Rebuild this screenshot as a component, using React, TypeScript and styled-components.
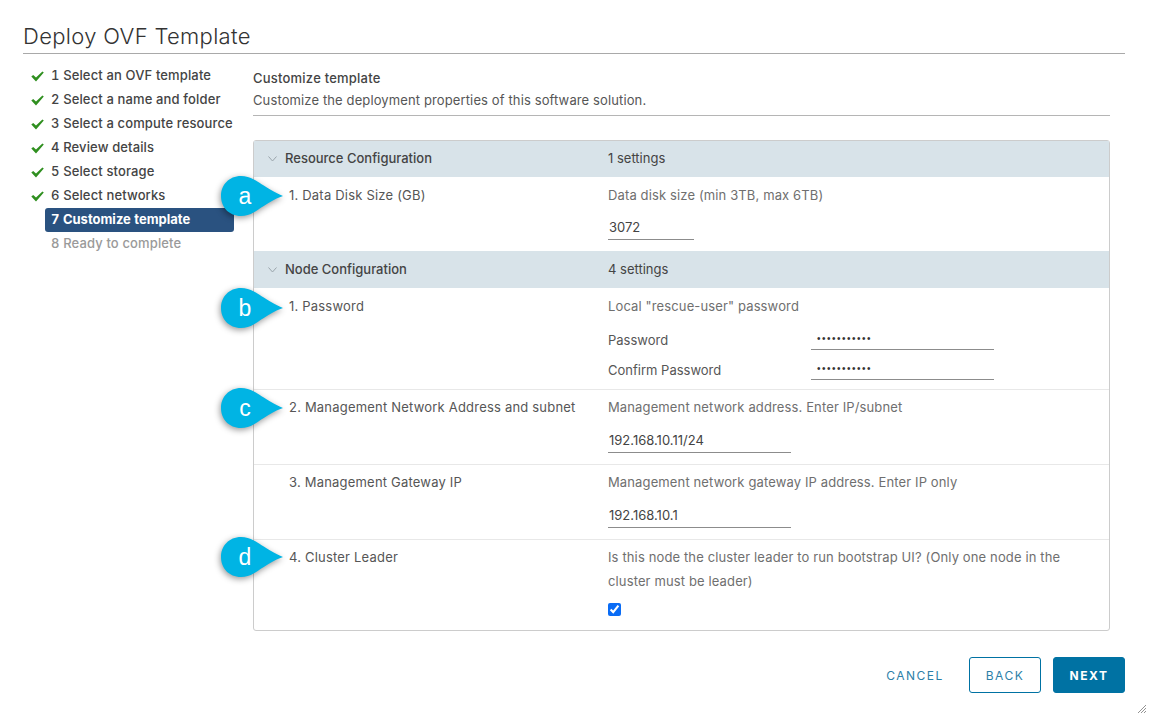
import styled, { createGlobalStyle } from "styled-components";

const GlobalStyle = createGlobalStyle`
  html, body {
    margin: 0;
    padding: 0;
    background: #fff;
  }
  body {
    font-family: Inter, "Liberation Sans", sans-serif;
    font-size: 13px;
    color: #565656;
  }
  * {
    box-sizing: border-box;
  }
`;

const Modal = styled.div`
  position: relative;
  width: 1149px;
  height: 717px;
  padding: 20px 24px 24px 23px;
  overflow: hidden;
  display: flex;
  flex-direction: column;
`;

const Title = styled.h1`
  margin: 0;
  height: 34px;
  line-height: 33px;
  font-size: 22px;
  font-weight: 300;
  letter-spacing: 0.32px;
  color: #333;
  border-bottom: 1px solid #a9a9a9;
`;

const Body = styled.div`
  display: flex;
  height: 603px;
`;

const Steps = styled.ol`
  list-style: none;
  margin: 10px 0 0;
  padding: 0;
  width: 230px;
  flex: none;
`;

const Step = styled.li<{ $active?: boolean; $pending?: boolean }>`
  display: flex;
  align-items: center;
  height: 24px;
  width: 211px;
  padding-bottom: 2px;
  font-size: 13px;
  font-weight: 500;
  font-variant-numeric: tabular-nums;
  letter-spacing: 0.13px;
  white-space: nowrap;
  border-radius: 3px;
  padding-left: 28px;
  color: ${(p) => (p.$pending ? "#9a9a9a" : "#444")};
  ${(p) =>
    p.$active &&
    `
    margin-left: 22px;
    width: 189px;
    padding-left: 6px;
    background: #2a5280;
    color: #fff;
    font-weight: 700;
    letter-spacing: 0;
  `}
`;

const CheckMark = styled.svg`
  width: 13px;
  height: 11px;
  margin: 2px 7px 0 -20px;
  flex: none;
  fill: #2f8f1f;
`;

const Main = styled.div`
  width: 857px;
`;

const Heading = styled.div`
  height: 62px;
  padding-top: 13px;
  border-bottom: 1px solid #b5b5b5;
`;

const HeadingTitle = styled.div`
  font-size: 13px;
  font-weight: 500;
  line-height: 22px;
  letter-spacing: 0.22px;
  color: #444;
`;

const HeadingText = styled.div`
  font-size: 13px;
  line-height: 22px;
  letter-spacing: 0.12px;
  color: #565656;
`;

const Panel = styled.div`
  margin-top: 24px;
  border: 1px solid #ccc;
  border-radius: 3px;
  height: 491px;
`;

const SectionHeader = styled.div`
  display: grid;
  grid-template-columns: 354px 1fr;
  align-items: center;
  height: 37px;
  padding-bottom: 1px;
  background: #d8e3e9;
  color: #444;
  &:first-child {
    height: 36px;
    padding-bottom: 2px;
  }
`;

const SectionName = styled.div`
  display: flex;
  align-items: center;
  gap: 8px;
  padding-left: 14px;
  font-weight: 500;
  font-size: 13px;
`;

const SectionCount = styled.div`
  font-size: 13px;
`;

const Chevron = styled.svg`
  width: 9px;
  height: 6px;
  margin-top: 2px;
  fill: none;
  stroke: #9aa5ab;
  stroke-width: 1;
`;

const Row = styled.div<{ $height: number; $last?: boolean; $inset?: number }>`
  position: relative;
  display: grid;
  grid-template-columns: 354px 1fr;
  height: ${(p) => p.$height}px;
  padding-top: ${(p) => p.$inset ?? 6}px;
  border-bottom: ${(p) => (p.$last ? "none" : "1px solid #e8e8e8")};
`;

const Label = styled.div`
  padding-left: 35px;
  line-height: 24px;
  font-size: 13px;
  letter-spacing: 0.2px;
  color: #565656;
`;

const Setting = styled.div`
  display: flex;
  flex-direction: column;
  align-items: flex-start;
  width: 480px;
`;

const Description = styled.div`
  line-height: 24px;
  font-size: 13px;
  letter-spacing: 0.13px;
  color: #6f6f6f;
`;

const Input = styled.div<{ $width: number; $gap?: number }>`
  width: ${(p) => p.$width}px;
  height: 25px;
  margin-top: ${(p) => p.$gap ?? 8}px;
  padding-left: 1px;
  line-height: 24px;
  font-size: 13px;
  color: #444;
  border-bottom: 1px solid #8c8c8c;
`;

const Fields = styled.div`
  display: flex;
  flex-direction: column;
  gap: 5px;
  margin-top: 7px;
`;

const Field = styled.div`
  display: grid;
  grid-template-columns: 203px 183px;
  align-items: center;
  font-size: 13px;
  color: #565656;
`;

const FieldName = styled.span`
  padding-top: 4px;
`;

const Secret = styled.div`
  height: 25px;
  padding: 9px 0 0 6px;
  border-bottom: 1px solid #8c8c8c;
  font-family: "Liberation Sans", sans-serif;
  font-size: 10px;
  line-height: 10px;
  letter-spacing: 1.5px;
  color: #333;
`;

const Checkbox = styled.input`
  width: 13px;
  height: 13px;
  margin: 10px 0 0;
  accent-color: #0a6cf5;
`;

const Footer = styled.div`
  display: flex;
  justify-content: flex-end;
  align-items: center;
  height: 36px;
  gap: 12px;
`;

const Button = styled.button<{ $kind: "flat" | "outline" | "solid" }>`
  width: ${(p) => (p.$kind === "flat" ? "84px" : "72px")};
  height: 36px;
  border-radius: 3px;
  font-family: Inter, "Liberation Sans", sans-serif;
  font-size: 12px;
  font-weight: ${(p) => (p.$kind === "solid" ? 700 : 400)};
  letter-spacing: 1.5px;
  border: 1px solid ${(p) => (p.$kind === "flat" ? "transparent" : "#0072a3")};
  background: ${(p) => (p.$kind === "solid" ? "#0072a3" : "#fff")};
  color: ${(p) => (p.$kind === "solid" ? "#fff" : "#2d7fa8")};
`;

const CalloutWrap = styled.div<{ $top: number }>`
  position: absolute;
  left: -33px;
  top: ${(p) => p.$top}px;
  width: 62px;
  height: 40px;
`;

const CalloutShape = styled.svg`
  position: absolute;
  inset: 0;
  width: 62px;
  height: 40px;
  overflow: visible;
  fill: #00b4e4;
  filter: drop-shadow(-1px 2px 3px rgba(0, 0, 0, 0.4));
`;

const CalloutLetter = styled.span`
  position: absolute;
  left: 16px;
  top: 5px;
  width: 16px;
  text-align: center;
  font-family: "Liberation Sans", sans-serif;
  font-size: 23px;
  line-height: 30px;
  color: #fff;
`;

const Grip = styled.svg`
  position: absolute;
  right: 3px;
  bottom: 4px;
  width: 8px;
  height: 8px;
  stroke: #777;
  stroke-width: 0.8;
`;

function Callout({ letter, top }: { letter: string; top: number }) {
  return (
    <CalloutWrap $top={top}>
      <CalloutShape viewBox="0 0 62 40">
        <path d="M20 0 C34 0 42 12 62 20 C42 27 34 40 20 40 C8 40 0 31 0 20 C0 9 8 0 20 0 Z" />
      </CalloutShape>
      <CalloutLetter>{letter}</CalloutLetter>
    </CalloutWrap>
  );
}

const steps = [
  "1 Select an OVF template",
  "2 Select a name and folder",
  "3 Select a compute resource",
  "4 Review details",
  "5 Select storage",
  "6 Select networks",
];

export default function App() {
  return (
    <>
      <GlobalStyle />
      <Modal>
        <Title>Deploy OVF Template</Title>
        <Body>
          <Steps>
            {steps.map((s) => (
              <Step key={s}>
                <CheckMark viewBox="0 0 13 11">
                  <path d="M0.3 5.6 L2.2 3.9 L5 6.4 L11.4 0.4 L12.8 1.6 L5 10.6 Z" />
                </CheckMark>
                {s}
              </Step>
            ))}
            <Step $active>7 Customize template</Step>
            <Step $pending>8 Ready to complete</Step>
          </Steps>
          <Main>
            <Heading>
              <HeadingTitle>Customize template</HeadingTitle>
              <HeadingText>Customize the deployment properties of this software solution.</HeadingText>
            </Heading>
            <Panel>
              <SectionHeader>
                <SectionName>
                  <Chevron viewBox="0 0 9 6"><path d="M0.5 0.5 L4.5 5 L8.5 0.5" /></Chevron>
                  Resource Configuration
                </SectionName>
                <SectionCount>1 settings</SectionCount>
              </SectionHeader>
              <Row $height={74} $last>
                <Callout letter="a" top={-1} />
                <Label>1. Data Disk Size (GB)</Label>
                <Setting>
                  <Description>Data disk size (min 3TB, max 6TB)</Description>
                  <Input $width={86}>3072</Input>
                </Setting>
              </Row>
              <SectionHeader>
                <SectionName>
                  <Chevron viewBox="0 0 9 6"><path d="M0.5 0.5 L4.5 5 L8.5 0.5" /></Chevron>
                  Node Configuration
                </SectionName>
                <SectionCount>4 settings</SectionCount>
              </SectionHeader>
              <Row $height={102}>
                <Callout letter="b" top={0} />
                <Label>1. Password</Label>
                <Setting>
                  <Description>Local "rescue-user" password</Description>
                  <Fields>
                    <Field>
                      <FieldName>Password</FieldName>
                      <Secret>•••••••••••</Secret>
                    </Field>
                    <Field>
                      <FieldName>Confirm Password</FieldName>
                      <Secret>•••••••••••</Secret>
                    </Field>
                  </Fields>
                </Setting>
              </Row>
              <Row $height={75} $inset={5}>
                <Callout letter="c" top={-2} />
                <Label>2. Management Network Address and subnet</Label>
                <Setting>
                  <Description>Management network address. Enter IP/subnet</Description>
                  <Input $width={183} $gap={9}>192.168.10.11/24</Input>
                </Setting>
              </Row>
              <Row $height={75} $inset={5}>
                <Label>3. Management Gateway IP</Label>
                <Setting>
                  <Description>Management network gateway IP address. Enter IP only</Description>
                  <Input $width={183} $gap={9}>192.168.10.1</Input>
                </Setting>
              </Row>
              <Row $height={91} $last $inset={5}>
                <Callout letter="d" top={-3} />
                <Label>4. Cluster Leader</Label>
                <Setting>
                  <Description>
                    Is this node the cluster leader to run bootstrap UI? (Only one node in the cluster must be leader)
                  </Description>
                  <Checkbox type="checkbox" defaultChecked />
                </Setting>
              </Row>
            </Panel>
          </Main>
        </Body>
        <Footer>
          <Button $kind="flat">CANCEL</Button>
          <Button $kind="outline">BACK</Button>
          <Button $kind="solid">NEXT</Button>
        </Footer>
        <Grip viewBox="0 0 8 8">
          <path d="M0 8 L8 0 M3 8 L8 3 M6 8 L8 6" />
        </Grip>
      </Modal>
    </>
  );
}
